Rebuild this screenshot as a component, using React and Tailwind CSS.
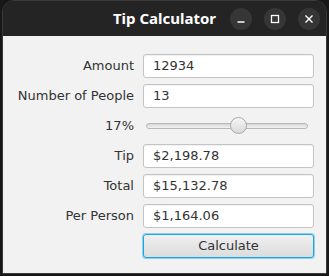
import React from "react";

function Field({ value }) {
  return (
    <div className="h-[24px] rounded-[3px] border border-[#c4c4c4] bg-white px-[9px] flex items-center text-[#333] shadow-[inset_0_1px_1px_rgba(0,0,0,0.06)]">
      {value}
    </div>
  );
}

function Label({ children }) {
  return <div className="h-[24px] flex items-center justify-end text-[#333]">{children}</div>;
}

export default function App() {
  return (
    <div className="w-[329px] h-[276px] bg-[#171717] pl-[2px] pr-[2px] pb-[2px]" style={{ fontFamily: "'DejaVu Sans', sans-serif" }}>
      <div className="h-full flex flex-col rounded-t-[12px] border border-[#3a3a3a] overflow-hidden">
        {/* title bar */}
        <div className="h-[35px] bg-[#242424] relative flex items-center justify-center">
          <span className="text-white font-bold text-[15px]" style={{ fontFamily: "'Noto Sans', sans-serif" }}>
            Tip Calculator
          </span>
          <div className="absolute right-[6px] top-[7px] flex gap-[12px]">
            <div className="w-[22px] h-[22px] rounded-full bg-[#363636] flex items-center justify-center">
              <svg width="10" height="10" viewBox="0 0 10 10">
                <path d="M1.5 8h7" stroke="#fff" strokeWidth="1.4" />
              </svg>
            </div>
            <div className="w-[22px] h-[22px] rounded-full bg-[#363636] flex items-center justify-center">
              <svg width="10" height="10" viewBox="0 0 10 10">
                <rect x="1.5" y="1.5" width="7" height="7" fill="none" stroke="#fff" strokeWidth="1.3" />
              </svg>
            </div>
            <div className="w-[22px] h-[22px] rounded-full bg-[#363636] flex items-center justify-center">
              <svg width="10" height="10" viewBox="0 0 10 10">
                <path d="M1.5 1.5l7 7M8.5 1.5l-7 7" stroke="#fff" strokeWidth="1.4" />
              </svg>
            </div>
          </div>
        </div>

        {/* content */}
        <div className="flex-1 bg-[#f2f2f2] pt-[18px] pr-[12px] text-[13px]">
          <div className="grid grid-cols-[1fr_171px] gap-x-[9px] gap-y-[6px]">
            <Label>Amount</Label>
            <Field value="12934" />
            <Label>Number of People</Label>
            <Field value="13" />
            <Label>17%</Label>
            <div className="h-[24px] flex items-center pl-[3px] pr-[6px]">
              <div className="relative w-full h-[6px] rounded-full border border-[#b8b8b8] bg-gradient-to-b from-[#d6d6d6] to-[#f4f4f4]">
                <div className="absolute left-[83px] top-[-7px] w-[17px] h-[17px] rounded-full border border-[#a8a8a8] bg-gradient-to-b from-[#f6f6f6] to-[#dadada]" />
              </div>
            </div>
            <Label>Tip</Label>
            <Field value="$2,198.78" />
            <Label>Total</Label>
            <Field value="$15,132.78" />
            <Label>Per Person</Label>
            <Field value="$1,164.06" />
            <div />
            <button className="h-[24px] rounded-[3px] border border-[#1aa6e0] ring-1 ring-[#8fd0ee] bg-gradient-to-b from-[#f0f0f0] to-[#dcdcdc] text-[#333] text-[13px]">
              Calculate
            </button>
          </div>
        </div>
      </div>
    </div>
  );
}
